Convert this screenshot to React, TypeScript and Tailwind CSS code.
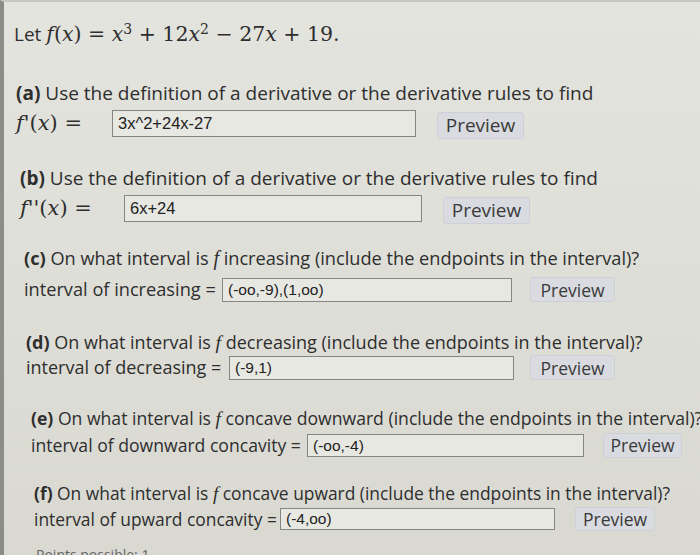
import React from "react";

interface Part {
  tag: string;
  pre: string;
  post: string;
  label: string;
  value: string;
  padLeft: string;
  top: string;
  textSize: string;
  rowGap: string;
  labelW: string;
  inputW: string;
  inputH: string;
  btnGap: string;
  btnW: string;
  btnH: string;
}

const serif = { fontFamily: '"DejaVu Serif", "Liberation Serif", serif' };

const Fi = () => (
  <span className="italic text-[1.1em]" style={{ fontFamily: '"Liberation Serif", serif' }}>
    f
  </span>
);

const parts: Part[] = [
  {
    tag: "(c)",
    pre: "On what interval is ",
    post: " increasing (include the endpoints in the interval)?",
    label: "interval of increasing =",
    value: "(-oo,-9),(1,oo)",
    padLeft: "pl-[20px]",
    top: "mt-[24px]",
    textSize: "text-[18.2px]",
    rowGap: "mt-[6px]",
    labelW: "w-[198px]",
    inputW: "w-[290px]",
    inputH: "h-[24px]",
    btnGap: "ml-[18px]",
    btnW: "w-[85px]",
    btnH: "h-[25px]",
  },
  {
    tag: "(d)",
    pre: "On what interval is ",
    post: " decreasing (include the endpoints in the interval)?",
    label: "interval of decreasing =",
    value: "(-9,1)",
    padLeft: "pl-[22px]",
    top: "mt-[27px]",
    textSize: "text-[18px]",
    rowGap: "mt-[0px]",
    labelW: "w-[203px]",
    inputW: "w-[285px]",
    inputH: "h-[24px]",
    btnGap: "ml-[16px]",
    btnW: "w-[85px]",
    btnH: "h-[25px]",
  },
  {
    tag: "(e)",
    pre: "On what interval is ",
    post: " concave downward (include the endpoints in the interval)?",
    label: "interval of downward concavity =",
    value: "(-oo,-4)",
    padLeft: "pl-[27px]",
    top: "mt-[25px]",
    textSize: "text-[17.6px]",
    rowGap: "mt-[1px]",
    labelW: "w-[276px]",
    inputW: "w-[277px]",
    inputH: "h-[23px]",
    btnGap: "ml-[19px]",
    btnW: "w-[79px]",
    btnH: "h-[25px]",
  },
  {
    tag: "(f)",
    pre: "On what interval is ",
    post: " concave upward (include the endpoints in the interval)?",
    label: "interval of upward concavity =",
    value: "(-4,oo)",
    padLeft: "pl-[30px]",
    top: "mt-[22px]",
    textSize: "text-[17.4px]",
    rowGap: "mt-[0px]",
    labelW: "w-[246px]",
    inputW: "w-[275px]",
    inputH: "h-[22px]",
    btnGap: "ml-[20px]",
    btnW: "w-[80px]",
    btnH: "h-[24px]",
  },
];

const Preview = ({ w, h, gap, size }: { w: string; h: string; gap: string; size: string }) => (
  <button
    className={`${w} ${h} ${gap} ${size} shrink-0 rounded-[3px] border border-[#cdd0d6] bg-[#d9dbe0] text-[#3a3a3a] flex items-center justify-center`}
  >
    Preview
  </button>
);

const Answer = ({ value, w, h, size }: { value: string; w: string; h: string; size: string }) => (
  <div
    className={`${w} ${h} ${size} shrink-0 border border-[#858583] bg-[#e8e8e3] flex items-center pl-[5px] text-[#222]`}
    style={{ fontFamily: '"Liberation Sans", Arial, sans-serif' }}
  >
    {value}
  </div>
);

export default function App() {
  return (
    <div
      className="w-[700px] h-[555px] overflow-hidden bg-linear-to-b from-[#e4e4de] to-[#d9d9d2] border-l-[4px] border-t-[2px] border-l-[#8d8d88] border-t-[#c9c9c4] text-[#2e2e2e] flex flex-col"
      style={{ fontFamily: '"Open Sans", "Noto Sans", sans-serif' }}
    >
      <div className="pl-[10px] pt-[17px] text-[20.5px] leading-[28px] whitespace-nowrap">
        <span className="text-[19px]">Let </span>
        <span style={serif}>
          <i>f</i>(<i>x</i>) = <i>x</i>
          <sup className="text-[14px]">3</sup> + 12<i>x</i>
          <sup className="text-[14px]">2</sup> − 27<i>x</i> + 19.
        </span>
      </div>

      <div className="pl-[12px] mt-[33px] text-[19px]">
        <div className="leading-[24px] whitespace-nowrap">
          <span className="font-bold">(a)</span> Use the definition of a derivative or the derivative rules to find
        </div>
        <div className="flex items-center mt-[5px] h-[27px]">
          <div className="w-[96px] text-[21px] whitespace-nowrap" style={serif}>
            <i>f</i>'(<i>x</i>) =
          </div>
          <Answer value="3x^2+24x-27" w="w-[304px]" h="h-[27px]" size="text-[16.5px]" />
          <div className="mt-[3px]">
            <Preview w="w-[87px]" h="h-[27px]" gap="ml-[21px]" size="text-[19px]" />
          </div>
        </div>
      </div>

      <div className="pl-[16px] mt-[29px] text-[19px]">
        <div className="leading-[24px] whitespace-nowrap">
          <span className="font-bold">(b)</span> Use the definition of a derivative or the derivative rules to find
        </div>
        <div className="flex items-center mt-[5px] h-[27px]">
          <div className="w-[104px] text-[21px] whitespace-nowrap" style={serif}>
            <i>f</i>''(<i>x</i>) =
          </div>
          <Answer value="6x+24" w="w-[298px]" h="h-[27px]" size="text-[16.5px]" />
          <div className="mt-[3px]">
            <Preview w="w-[87px]" h="h-[27px]" gap="ml-[21px]" size="text-[19px]" />
          </div>
        </div>
      </div>

      {parts.map((p) => (
        <div key={p.tag} className={`${p.padLeft} ${p.top} ${p.textSize}`}>
          <div className="leading-[24px] whitespace-nowrap">
            <span className="font-bold">{p.tag}</span> {p.pre}
            <Fi />
            {p.post}
          </div>
          <div className={`flex items-center ${p.rowGap}`}>
            <div className={`${p.labelW} shrink-0 whitespace-nowrap`}>{p.label}</div>
            <Answer value={p.value} w={p.inputW} h={p.inputH} size="text-[15.5px]" />
            <Preview w={p.btnW} h={p.btnH} gap={p.btnGap} size="text-[17.5px]" />
          </div>
        </div>
      ))}

      <div className="pl-[32px] mt-[12px] text-[14px] text-[#666] whitespace-nowrap">Points possible: 1</div>
    </div>
  );
}
